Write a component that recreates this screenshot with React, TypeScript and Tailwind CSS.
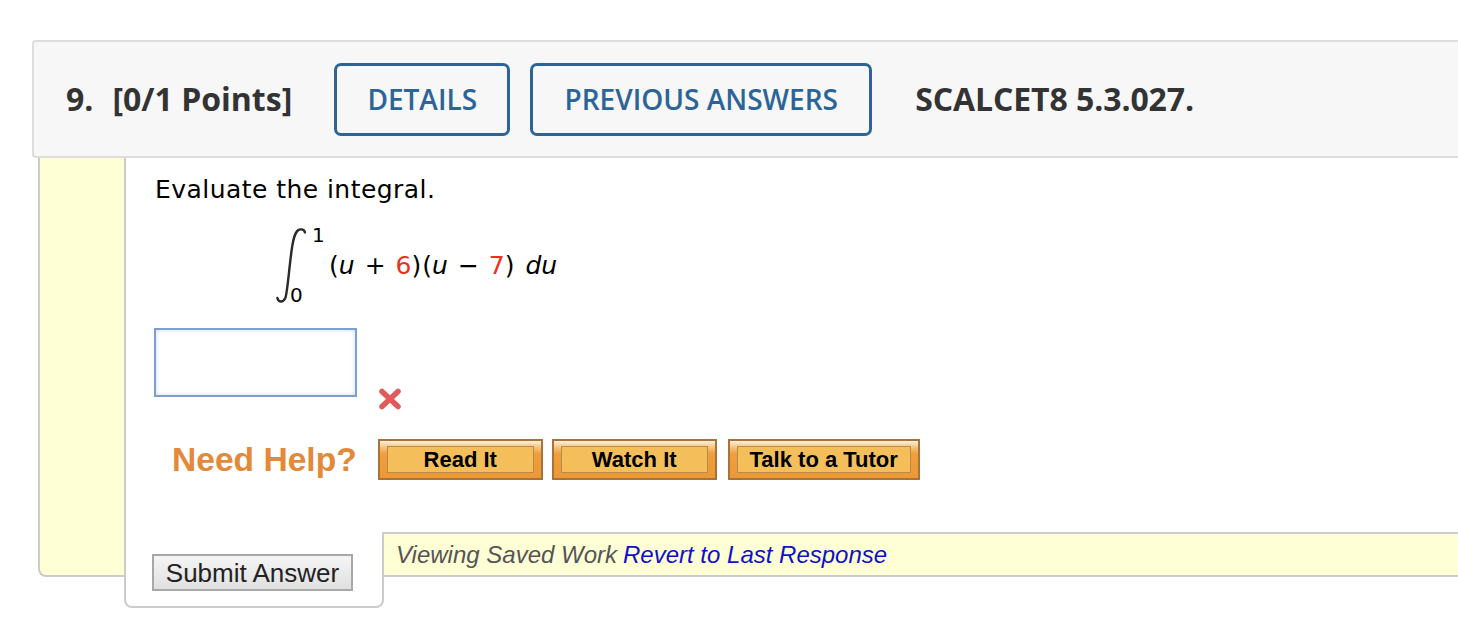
import React from "react";

function HelpButton({ label, className }: { label: string; className: string }) {
  return (
    <div
      className={
        "h-[41px] border-2 border-[#a8733b] bg-[linear-gradient(to_bottom,#fdf1dc_0%,#f7cb8e_14%,#ef9f3e_34%,#ec9834_100%)] px-[7px] py-[5px] " +
        className
      }
    >
      <div className="flex h-full items-center justify-center border border-[#b98a4c] bg-[#f4bf5a] font-['Liberation_Sans',Arial,sans-serif] text-[22px] font-bold leading-none text-black">
        {label}
      </div>
    </div>
  );
}

export default function App() {
  return (
    <div className="h-[638px] w-[1458px] overflow-hidden bg-white pl-[32px] pt-[40px]">
      {/* Header */}
      <div className="flex h-[118px] items-center rounded-l-[4px] border-2 border-r-0 border-[#dddddd] bg-[#f7f7f7] pl-[32px] font-['Open_Sans',sans-serif] text-[#333333]">
        <span className="text-[32px] font-bold leading-none">9.</span>
        <span className="ml-[19px] text-[32px] font-bold leading-none">[0/1 Points]</span>
        <div className="ml-[42px] flex h-[73px] w-[176px] items-center justify-center rounded-[7px] border-[3px] border-[#2d6497] text-[28px] font-semibold leading-none text-[#2d6497]">
          DETAILS
        </div>
        <div className="ml-[20px] flex h-[73px] w-[342px] items-center justify-center rounded-[7px] border-[3px] border-[#2d6497] text-[28px] font-semibold leading-none text-[#2d6497]">
          PREVIOUS ANSWERS
        </div>
        <span className="ml-[43px] text-[32px] font-bold leading-none tracking-[-0.1px]">SCALCET8 5.3.027.</span>
      </div>

      {/* Body */}
      <div className="ml-[6px] flex rounded-bl-[8px] border-b-2 border-l-2 border-[#cccccc] bg-[#ffffd5]">
        <div className="w-[84px] shrink-0" />
        <div className="flex flex-1 flex-col">
          <div className="h-[374px] border-l-2 border-[#cccccc] bg-white pl-[27px] pt-[19px]">
            <div className="ml-[2px] font-['DejaVu_Sans',Verdana,sans-serif] text-[25px] leading-[25px] tracking-[0.45px] text-black">
              Evaluate the integral.
            </div>

            {/* Integral */}
            <div className="ml-[123px] mt-[25px] flex items-start">
              <div className="relative h-[76px] w-[52px] shrink-0">
                <svg width="30" height="76" viewBox="0 0 30 76" className="absolute left-0 top-0">
                  <path
                    d="M1.4 71 C2.4 75.6 7.2 75.9 9.4 70.8 C11.4 65.6 13.2 40 15.8 22 C17.6 10 19.4 3 24.2 2.4 C27 2.1 28.6 3.6 29 5.4"
                    fill="none"
                    stroke="#2a2a2a"
                    strokeWidth="2.4"
                    strokeLinecap="round"
                  />
                </svg>
                <span className="absolute left-[36px] top-[-2px] font-['DejaVu_Sans',Verdana,sans-serif] text-[20px] leading-[20px] text-black">
                  1
                </span>
                <span className="absolute left-[14px] top-[58px] font-['DejaVu_Sans',Verdana,sans-serif] text-[20px] leading-[20px] text-black">
                  0
                </span>
              </div>
              <div className="ml-[1px] mt-[26px] font-['DejaVu_Sans',Verdana,sans-serif] text-[25px] leading-[25px] text-black">
                <span>(</span>
                <span className="italic">u</span>
                <span className="mx-[10px]">+</span>
                <span className="text-[#e8321e]">6</span>
                <span>)</span>
                <span className="ml-[1px]">(</span>
                <span className="italic">u</span>
                <span className="mx-[10px]">−</span>
                <span className="text-[#e8321e]">7</span>
                <span>)</span>
                <span className="ml-[11px] italic">du</span>
              </div>
            </div>

            {/* Answer input */}
            <div className="ml-[1px] mt-[25px] flex items-start">
              <div className="h-[69px] w-[203px] border-2 border-[#7f9ecb] bg-white shadow-[inset_0_0_4px_#c9d9ef]" />
              <svg width="26" height="24" viewBox="0 0 26 24" className="ml-[20px] mt-[59px]">
                <path d="M5 4.5 L21 19.5 M21 4.5 L5 19.5" stroke="#e35a5a" strokeWidth="5.5" strokeLinecap="round" />
              </svg>
            </div>

            {/* Need help */}
            <div className="mt-[28px] flex items-center">
              <span className="ml-[19px] font-['Liberation_Sans',Arial,sans-serif] text-[33.6px] font-bold leading-none text-[#e3893a]">
                Need Help?
              </span>
              <HelpButton label="Read It" className="ml-[21px] w-[165px]" />
              <HelpButton label="Watch It" className="ml-[9px] w-[165px]" />
              <HelpButton label="Talk to a Tutor" className="ml-[11px] w-[192px]" />
            </div>
          </div>

          {/* Bottom row */}
          <div className="flex h-[43px] items-start">
            <div className="relative -mb-[33px] h-[76px] w-[260px] shrink-0 rounded-b-[8px] border-2 border-t-0 border-[#cccccc] bg-white pl-[26px] pt-[22px]">
              <div className="flex h-[37px] w-[201px] items-center justify-center border-2 border-[#a8a8a8] bg-[linear-gradient(to_bottom,#f5f5f5,#e0e0e0)] font-['Liberation_Sans',Arial,sans-serif] text-[26px] leading-none text-[#222222]">
                Submit Answer
              </div>
            </div>
            <div className="flex h-[43px] flex-1 items-center border-t-2 border-[#cccccc] pl-[12px] font-['Liberation_Sans',Arial,sans-serif] text-[24px] italic leading-none">
              <span className="text-[#555555]">Viewing Saved Work</span>
              <span className="ml-[6px] text-[#1010c8]">Revert to Last Response</span>
            </div>
          </div>
        </div>
      </div>
    </div>
  );
}
